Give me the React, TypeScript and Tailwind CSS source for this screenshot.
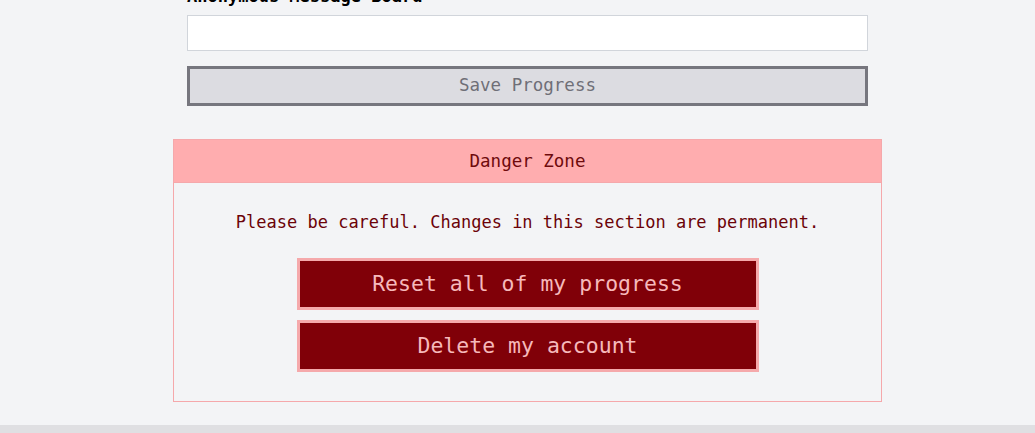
export default function App() {
  return (
    <div className="min-h-[433px] bg-[#f3f4f6] font-['DejaVu_Sans_Mono',monospace] overflow-hidden">
      <div className="w-[709px] ml-[173px] pb-[23px]">
        <form className="px-[14px] -mt-[14px]" onSubmit={(e) => e.preventDefault()}>
          <label className="block text-[17px] leading-[20px] font-bold text-black mb-[9px]">
            Anonymous Message Board
          </label>
          <input
            type="text"
            className="block w-full h-[36px] bg-white border border-[#d1d5db] px-3 outline-none"
          />
          <button
            type="submit"
            className="block w-full h-[40px] mt-[15px] bg-[#dcdce1] border-[3px] border-[#76767e] text-[#6f6f77] text-[17.5px] leading-none"
          >
            Save Progress
          </button>
        </form>

        <div className="mt-[33px] border border-[#f5a8ab]">
          <div className="h-[43px] flex items-center justify-center bg-[#ffadaf] border-b border-[#f5a8ab] text-[#6e0a0c] text-[17.5px]">
            Danger Zone
          </div>
          <div className="flex flex-col items-center pt-[27px] pb-[29px]">
            <p className="text-[17px] leading-[24px] text-[#6b0208] mb-[24px]">
              Please be careful. Changes in this section are permanent.
            </p>
            <div className="flex flex-col gap-[10px]">
              <button className="w-[462px] h-[52px] bg-[#800008] border-[3px] border-[#f5a9ab] text-[#f6b9bb] text-[21.5px] leading-none">
                Reset all of my progress
              </button>
              <button className="w-[462px] h-[52px] bg-[#800008] border-[3px] border-[#f5a9ab] text-[#f6b9bb] text-[21.5px] leading-none">
                Delete my account
              </button>
            </div>
          </div>
        </div>
      </div>
      <div className="h-[8px] bg-[#dfdfe2]" />
    </div>
  );
}
